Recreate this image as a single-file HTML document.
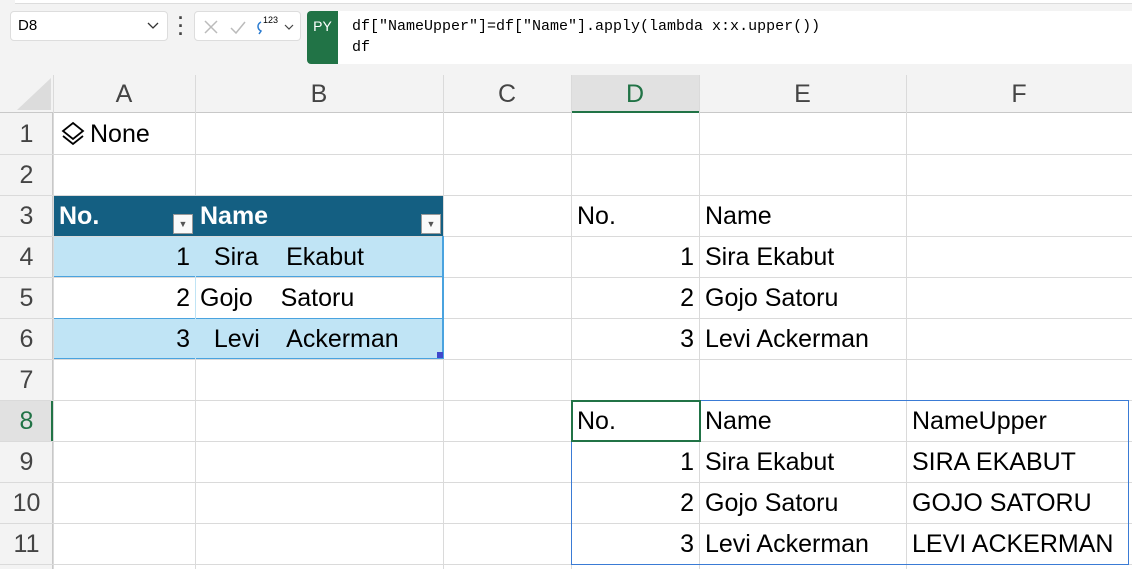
<!DOCTYPE html><html><head><style>
body{margin:0;width:1132px;height:569px;overflow:hidden;background:#fff;font-family:"Liberation Sans",sans-serif;position:relative}
div{position:absolute;box-sizing:border-box}
.t{font-size:25px;line-height:42px;white-space:pre;color:#000}
.h{font-size:25px;color:#444;text-align:center;line-height:39px}
.r{text-align:right}
</style></head><body>
<div style="left:0;top:0;width:1132px;height:75px;background:#f3f3f3"></div>
<div style="left:15px;top:0;width:1117px;height:4px;background:#fff;border-bottom:1px solid #ddd"></div>
<div style="left:10px;top:11px;width:158px;height:30px;background:#fff;border:1px solid #ddd;border-radius:4px;font-size:15px;line-height:28px;padding-left:7px">D8<svg style="position:absolute;right:8px;top:10px" width="12" height="8"><path d="M1 1l5 5 5-5" stroke="#333" fill="none" stroke-width="1.3"/></svg></div>
<div style="left:178px;top:14px;width:4px;height:20px;font-size:18px;line-height:8px;font-weight:bold;color:#444">·<br>·<br>·</div>
<div style="left:194px;top:11px;width:107px;height:30px;background:#fff;border:1px solid #ddd;border-radius:4px">
<svg width="107" height="30"><path d="M10 9l12 12M22 9L10 21" stroke="#bbb" stroke-width="1.5"/><path d="M36 16l5 5 9-11" stroke="#bbb" stroke-width="1.5" fill="none"/><path d="M66 10c-4 2-4 7 0 9l-2 3" stroke="#2a7bd0" stroke-width="1.5" fill="none"/><text x="68" y="11" font-size="9" font-family="Liberation Sans">123</text><path d="M90 13l4 4 4-4" stroke="#444" fill="none" stroke-width="1.2"/></svg></div>
<div style="left:307px;top:11px;width:31px;height:53px;background:#217346;border-radius:4px 0 0 4px;color:#fff;font-size:14px;text-align:center;line-height:30px">PY</div>
<div style="left:338px;top:11px;width:794px;height:53px;background:#fff;font-family:'Liberation Mono',monospace;font-size:15px;line-height:21px;padding:5px 0 0 14px;white-space:pre">df["NameUpper"]=df["Name"].apply(lambda x:x.upper())
df</div>
<div style="left:0;top:75px;width:1132px;height:38px;background:#f3f3f3;border-bottom:1px solid #c8c8c8"></div>
<div style="left:0;top:113px;width:53px;height:456px;background:#f3f3f3;border-right:1px solid #c8c8c8"></div>
<svg style="position:absolute;left:17px;top:78px" width="34" height="32"><path d="M34 0V32H0Z" fill="#dcdcdc"/></svg>
<div style="left:571px;top:75px;width:128px;height:38px;background:#e1e1e1;border-bottom:2px solid #217346"></div>
<div style="left:0;top:400px;width:53px;height:41px;background:#e1e1e1;border-right:2px solid #217346"></div>
<svg style="position:absolute;left:0;top:0" width="1132" height="569">
<g stroke="#dadada" stroke-width="1">
<path d="M53.5 75V569M195.5 75V569M443.5 75V569M571.5 75V569M699.5 75V569M906.5 75V569"/>
<path d="M0 154.5H1132M0 195.5H1132M0 236.5H1132M0 277.5H1132M0 318.5H1132M0 359.5H1132M0 400.5H1132M0 441.5H1132M0 482.5H1132M0 523.5H1132M0 564.5H1132"/>
</g></svg>
<div class="h" style="left:53px;top:75px;width:142px">A</div>
<div class="h" style="left:195px;top:75px;width:248px">B</div>
<div class="h" style="left:443px;top:75px;width:128px">C</div>
<div class="h" style="left:571px;top:75px;width:128px;color:#217346">D</div>
<div class="h" style="left:699px;top:75px;width:207px">E</div>
<div class="h" style="left:906px;top:75px;width:226px">F</div>
<div class="h" style="left:0;top:113px;width:53px;line-height:42px">1</div>
<div class="h" style="left:0;top:154px;width:53px;line-height:42px">2</div>
<div class="h" style="left:0;top:195px;width:53px;line-height:42px">3</div>
<div class="h" style="left:0;top:236px;width:53px;line-height:42px">4</div>
<div class="h" style="left:0;top:277px;width:53px;line-height:42px">5</div>
<div class="h" style="left:0;top:318px;width:53px;line-height:42px">6</div>
<div class="h" style="left:0;top:359px;width:53px;line-height:42px">7</div>
<div class="h" style="left:0;top:400px;width:53px;line-height:42px;color:#217346">8</div>
<div class="h" style="left:0;top:441px;width:53px;line-height:42px">9</div>
<div class="h" style="left:0;top:482px;width:53px;line-height:42px">10</div>
<div class="h" style="left:0;top:523px;width:53px;line-height:42px">11</div>
<svg style="position:absolute;left:60px;top:121px" width="26" height="26"><path d="M13 2L23 10 13 18 3 10Z" fill="none" stroke="#000" stroke-width="1.8"/><path d="M3 15l10 8 10-8" fill="none" stroke="#000" stroke-width="1.8"/></svg>
<div class="t" style="left:90px;top:113px">None</div>
<div style="left:54px;top:196px;width:389px;height:40px;background:#145f82"></div>
<div style="left:54px;top:237px;width:389px;height:40px;background:#c0e4f5;border-bottom:1px solid #4aa3df"></div>
<div style="left:54px;top:318px;width:389px;height:41px;background:#c0e4f5;border-top:1px solid #4aa3df;border-bottom:1px solid #4aa3df"></div>
<div style="left:442px;top:236px;width:2px;height:123px;background:#4aa3df"></div>
<div style="left:195px;top:237px;width:1px;height:122px;background:#c0e4f5"></div>
<div style="left:437px;top:352px;width:6px;height:6px;background:#3f48cc"></div>
<div class="t" style="left:59px;top:195px;color:#fff;font-weight:bold">No.</div>
<div class="t" style="left:200px;top:195px;color:#fff;font-weight:bold">Name</div>
<div style="left:173px;top:214px;width:20px;height:20px;background:#fafafa;border:1px solid #999;font-size:9px;text-align:center;line-height:18px;color:#555">▼</div>
<div style="left:421px;top:214px;width:20px;height:20px;background:#fafafa;border:1px solid #999;font-size:9px;text-align:center;line-height:18px;color:#555">▼</div>
<div class="t r" style="left:53px;top:236px;width:137px">1</div>
<div class="t r" style="left:53px;top:277px;width:137px">2</div>
<div class="t r" style="left:53px;top:318px;width:137px">3</div>
<div class="t" style="left:200px;top:236px">  Sira    Ekabut</div>
<div class="t" style="left:200px;top:277px">Gojo    Satoru</div>
<div class="t" style="left:200px;top:318px">  Levi    Ackerman</div>
<div class="t" style="left:577px;top:195px">No.</div>
<div class="t" style="left:705px;top:195px">Name</div>
<div class="t r" style="left:571px;top:236px;width:123px">1</div>
<div class="t r" style="left:571px;top:277px;width:123px">2</div>
<div class="t r" style="left:571px;top:318px;width:123px">3</div>
<div class="t" style="left:705px;top:236px">Sira Ekabut</div>
<div class="t" style="left:705px;top:277px">Gojo Satoru</div>
<div class="t" style="left:705px;top:318px">Levi Ackerman</div>
<div style="left:571px;top:400px;width:558px;height:165px;border:1px solid #3a7bd5"></div>
<div style="left:571px;top:400px;width:130px;height:42px;border:2px solid #217346"></div>
<div class="t" style="left:577px;top:400px">No.</div>
<div class="t" style="left:705px;top:400px">Name</div>
<div class="t" style="left:912px;top:400px">NameUpper</div>
<div class="t r" style="left:571px;top:441px;width:123px">1</div>
<div class="t r" style="left:571px;top:482px;width:123px">2</div>
<div class="t r" style="left:571px;top:523px;width:123px">3</div>
<div class="t" style="left:705px;top:441px">Sira Ekabut</div>
<div class="t" style="left:705px;top:482px">Gojo Satoru</div>
<div class="t" style="left:705px;top:523px">Levi Ackerman</div>
<div class="t" style="left:912px;top:441px">SIRA EKABUT</div>
<div class="t" style="left:912px;top:482px">GOJO SATORU</div>
<div class="t" style="left:912px;top:523px">LEVI ACKERMAN</div>
</body></html>
